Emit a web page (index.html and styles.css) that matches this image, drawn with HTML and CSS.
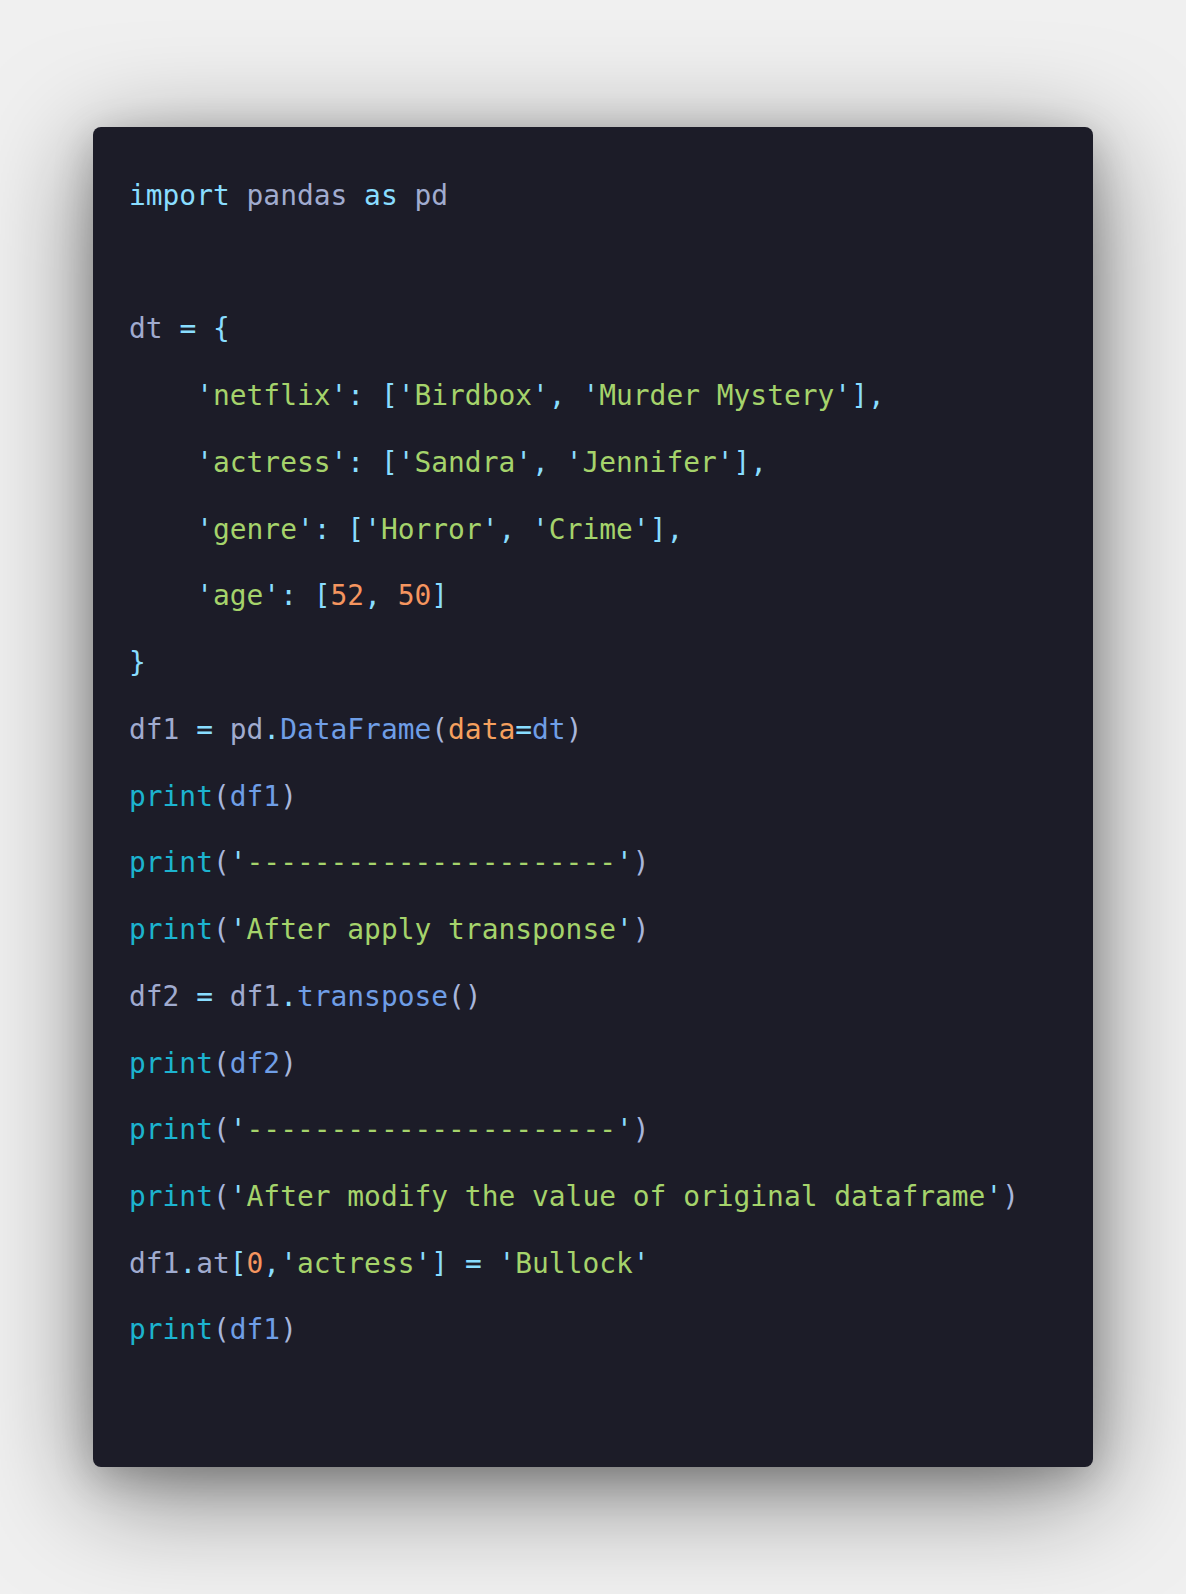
FILE: index.html
```html
<!DOCTYPE html>
<html lang="en">
<head>
<meta charset="utf-8">
<title>Code snippet</title>
<link rel="stylesheet" href="styles.css">
</head>
<body>
<main class="page">
<section class="card">
<pre class="code"><span class="kw">import</span> <span class="id">pandas</span> <span class="kw">as</span> <span class="id">pd</span>

<span class="id">dt</span> <span class="op">=</span> <span class="pu">{</span>
    <span class="pu">'</span><span class="str">netflix</span><span class="pu">'</span><span class="pu">:</span> <span class="pu">[</span><span class="pu">'</span><span class="str">Birdbox</span><span class="pu">'</span><span class="pu">,</span> <span class="pu">'</span><span class="str">Murder Mystery</span><span class="pu">'</span><span class="pu">],</span>
    <span class="pu">'</span><span class="str">actress</span><span class="pu">'</span><span class="pu">:</span> <span class="pu">[</span><span class="pu">'</span><span class="str">Sandra</span><span class="pu">'</span><span class="pu">,</span> <span class="pu">'</span><span class="str">Jennifer</span><span class="pu">'</span><span class="pu">],</span>
    <span class="pu">'</span><span class="str">genre</span><span class="pu">'</span><span class="pu">:</span> <span class="pu">[</span><span class="pu">'</span><span class="str">Horror</span><span class="pu">'</span><span class="pu">,</span> <span class="pu">'</span><span class="str">Crime</span><span class="pu">'</span><span class="pu">],</span>
    <span class="pu">'</span><span class="str">age</span><span class="pu">'</span><span class="pu">:</span> <span class="pu">[</span><span class="num">52</span><span class="pu">,</span> <span class="num">50</span><span class="pu">]</span>
<span class="pu">}</span>
<span class="id">df1</span> <span class="op">=</span> <span class="id">pd</span><span class="pu">.</span><span class="fn">DataFrame</span><span class="paren">(</span><span class="param">data</span><span class="op">=</span><span class="fn">dt</span><span class="paren">)</span>
<span class="bi">print</span><span class="paren">(</span><span class="fn">df1</span><span class="paren">)</span>
<span class="bi">print</span><span class="paren">(</span><span class="pu">'</span><span class="str">----------------------</span><span class="pu">'</span><span class="paren">)</span>
<span class="bi">print</span><span class="paren">(</span><span class="pu">'</span><span class="str">After apply transponse</span><span class="pu">'</span><span class="paren">)</span>
<span class="id">df2</span> <span class="op">=</span> <span class="id">df1</span><span class="pu">.</span><span class="fn">transpose</span><span class="paren">()</span>
<span class="bi">print</span><span class="paren">(</span><span class="fn">df2</span><span class="paren">)</span>
<span class="bi">print</span><span class="paren">(</span><span class="pu">'</span><span class="str">----------------------</span><span class="pu">'</span><span class="paren">)</span>
<span class="bi">print</span><span class="paren">(</span><span class="pu">'</span><span class="str">After modify the value of original dataframe</span><span class="pu">'</span><span class="paren">)</span>
<span class="id">df1</span><span class="pu">.</span><span class="id">at</span><span class="pu">[</span><span class="num">0</span><span class="pu">,</span><span class="pu">'</span><span class="str">actress</span><span class="pu">'</span><span class="pu">]</span> <span class="op">=</span> <span class="pu">'</span><span class="str">Bullock</span><span class="pu">'</span>
<span class="bi">print</span><span class="paren">(</span><span class="fn">df1</span><span class="paren">)</span></pre>
</section>
</main>
</body>
</html>
```

FILE: styles.css
```css
html, body {
  margin: 0;
  padding: 0;
  background: #f0f0f0;
}

.page {
  display: flex;
  justify-content: center;
  align-items: flex-start;
  padding-top: 127px;
  min-height: 1594px;
  box-sizing: border-box;
  overflow: hidden;
}

.card {
  width: 1000px;
  height: 1340px;
  box-sizing: border-box;
  background: #1c1c28;
  border-radius: 8px;
  box-shadow: 0 24px 110px rgba(0, 0, 0, 0.5), 0 10px 40px rgba(0, 0, 0, 0.2);
  padding: 36px 34px 0 36px;
}

.code {
  margin: 0;
  font-family: "DejaVu Sans Mono", "Liberation Mono", monospace;
  font-size: 27.9px;
  line-height: 66.73px;
  color: #a0abcf;
  white-space: pre;
}

.kw { color: #89ddff; }
.id { color: #a0abcf; }
.op { color: #89ddff; }
.pu { color: #89ddff; }
.str { color: #a5d36b; }
.num { color: #f5955f; }
.fn { color: #6f9ee6; }
.bi { color: #1cb3cf; }
.paren { color: #a8b6db; }
.param { color: #f5a05e; }
```
